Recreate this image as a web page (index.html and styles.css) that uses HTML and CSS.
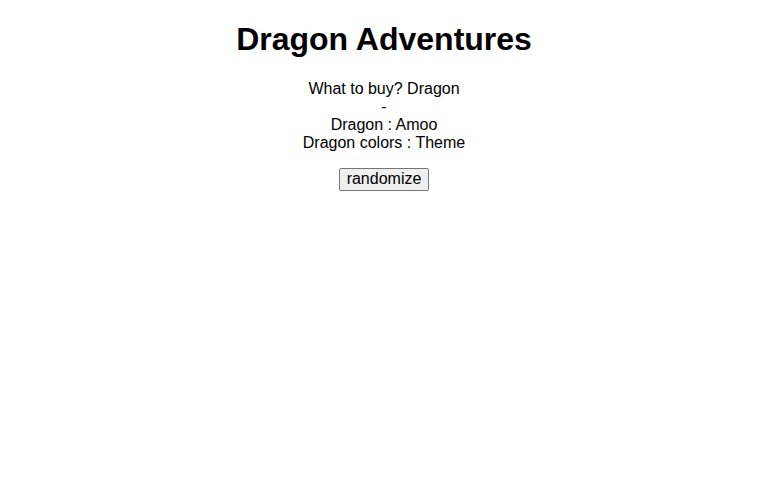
FILE: index.html
```html
<!DOCTYPE html>
<html lang="en">
<head>
    <meta charset="UTF-8">
    <meta name="viewport" content="width=device-width, initial-scale=1.0">
    <title>Dragon Adventures</title>
    <link rel="stylesheet" href="styles.css">
</head>
<body>

<h1>Dragon Adventures</h1>

<p class="result">
    What to buy? <span id="item">Dragon</span><br>
    <span id="extra">-</span><br>
    Dragon : <span id="dragon">Amoo</span><br>
    Dragon colors : <span id="colors">Theme</span>
</p>

<button class="randomize-button" onclick="randomize()">randomize</button>

<script>
    const items = ['Dragon', 'Potion', 'Egg', 'Token'];
    const dragons = ['Amoo', 'Zeus', 'Lumen', 'Kelpie', 'Ragnarok'];
    const colors = ['Theme', 'Random', 'Pastel', 'Dark'];

    function pick(list) {
        return list[Math.floor(Math.random() * list.length)];
    }

    function randomize() {
        document.getElementById('item').textContent = pick(items);
        document.getElementById('dragon').textContent = pick(dragons);
        document.getElementById('colors').textContent = pick(colors);
    }
</script>

</body>
</html>
```

FILE: styles.css
```css
body { font-family: "Liberation Sans", Arial, sans-serif; text-align: center; color: #000; background: #fff; margin: 0 8px 8px; }
h1 { font-size: 2em; margin: 0.67em 0; }
.result { font-size: 16px; line-height: 18px; margin: 16px 0; }
.randomize-button { font-family: "Liberation Sans", Arial, sans-serif; font-size: 16px; padding: 1px 7px; height: 23px; background: #efefef; border: 1px solid #767676; border-radius: 2px; color: #000; }
```
